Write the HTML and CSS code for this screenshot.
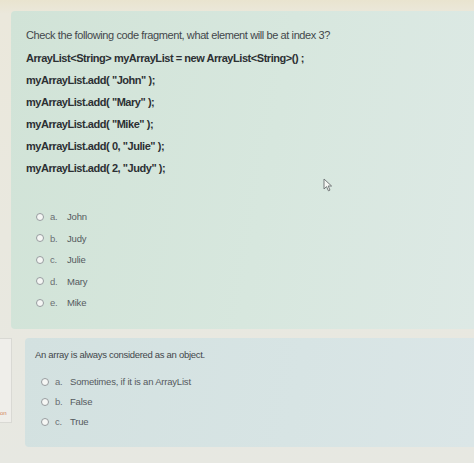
FILE: index.html
```html
<!DOCTYPE html>
<html>
<head>
<meta charset="utf-8">
<link rel="stylesheet" href="styles.css">
</head>
<body>
<div class="page">
  <section class="q q1">
    <p class="qtext">Check the following code fragment, what element will be at index 3?</p>
    <div class="code">
      <p>ArrayList&lt;String&gt; myArrayList = new ArrayList&lt;String&gt;() ;</p>
      <p>myArrayList.add( "John" );</p>
      <p>myArrayList.add( "Mary" );</p>
      <p>myArrayList.add( "Mike" );</p>
      <p>myArrayList.add( 0, "Julie" );</p>
      <p>myArrayList.add( 2, "Judy" );</p>
    </div>
    <ul class="opts">
      <li><span class="radio"></span><span class="let">a.</span><span class="txt">John</span></li>
      <li><span class="radio"></span><span class="let">b.</span><span class="txt">Judy</span></li>
      <li><span class="radio"></span><span class="let">c.</span><span class="txt">Julie</span></li>
      <li><span class="radio"></span><span class="let">d.</span><span class="txt">Mary</span></li>
      <li><span class="radio"></span><span class="let">e.</span><span class="txt">Mike</span></li>
    </ul>
    <svg class="cursor" width="10" height="14" viewBox="0 0 10 14">
      <path d="M1 1 L1 11 L3.5 8.6 L5.4 12.8 L7 12.1 L5.2 8 L8.6 8 Z" fill="#f4f6f2" stroke="#6a6e70" stroke-width="0.9" stroke-linejoin="round"/>
    </svg>
  </section>
  <div class="row2">
    <aside class="side"><span class="sidetxt">on</span></aside>
    <section class="q q2">
      <p class="qtext small">An array is always considered as an object.</p>
      <ul class="opts opts2">
        <li><span class="radio"></span><span class="let">a.</span><span class="txt">Sometimes, if it is an ArrayList</span></li>
        <li><span class="radio"></span><span class="let">b.</span><span class="txt">False</span></li>
        <li><span class="radio"></span><span class="let">c.</span><span class="txt">True</span></li>
      </ul>
    </section>
  </div>
</div>
</body>
</html>
```
FILE: styles.css
```css
* { box-sizing: border-box; }
html, body { margin: 0; padding: 0; }
body {
  width: 474px;
  height: 463px;
  overflow: hidden;
  background: linear-gradient(180deg, #e9e4cf 0px, #ebe8dc 14px, #e7e8e2 100%);
  font-family: "Liberation Sans", Arial, sans-serif;
  color: #3c4044;
}
p { margin: 0; }
ul { margin: 0; padding: 0; list-style: none; }

.page {
  display: flex;
  flex-direction: column;
  padding-top: 11px;
  gap: 9px;
}

.q {
  position: relative;
  border-radius: 4px 0 0 4px;
}

.q1 {
  margin-left: 11px;
  padding: 13px 0 15px 15px;
  background: linear-gradient(100deg, #d1e3d7 0%, #d7e7de 55%, #dde9e5 100%);
}

.qtext {
  font-size: 11px;
  line-height: 22px;
  letter-spacing: -0.4px;
  color: #43474b;
  margin-bottom: 1px;
}
.qtext.small {
  font-size: 9.5px;
  line-height: 20px;
  letter-spacing: -0.3px;
}

.code p {
  font-size: 11px;
  line-height: 22px;
  font-weight: bold;
  letter-spacing: -0.45px;
  color: #2c3033;
}

.opts {
  margin-top: 27px;
  padding-left: 10px;
}
.opts li {
  display: flex;
  align-items: center;
  height: 21.5px;
  font-size: 9.5px;
  letter-spacing: -0.2px;
  color: #595e62;
}
.radio {
  width: 8px;
  height: 8px;
  border-radius: 50%;
  border: 1.3px solid #979c9f;
  background: #f5f6f4;
  margin-right: 6px;
  flex: none;
}
.let {
  width: 17px;
  color: #6a6f73;
}
.txt { color: #555a5e; }

.cursor {
  position: absolute;
  left: 312px;
  top: 167px;
}

.row2 {
  display: flex;
  align-items: flex-start;
  gap: 13px;
}
.side {
  width: 12px;
  height: 85px;
  background: #efeeea;
  border: 1px solid #d9d9d4;
  border-left: none;
  display: flex;
  align-items: flex-end;
  padding-bottom: 6px;
}
.sidetxt {
  font-size: 6px;
  color: #d0825c;
  line-height: 6px;
}

.q2 {
  flex: 1;
  padding: 7px 0 15px 10px;
  background: linear-gradient(100deg, #d3e1e0 0%, #d7e4e4 60%, #dbe6e7 100%);
}
.opts2 {
  margin-top: 7px;
  padding-left: 6px;
}
.opts2 li {
  height: 20px;
  font-size: 9.5px;
}
.opts2 .let { width: 15px; }
```
